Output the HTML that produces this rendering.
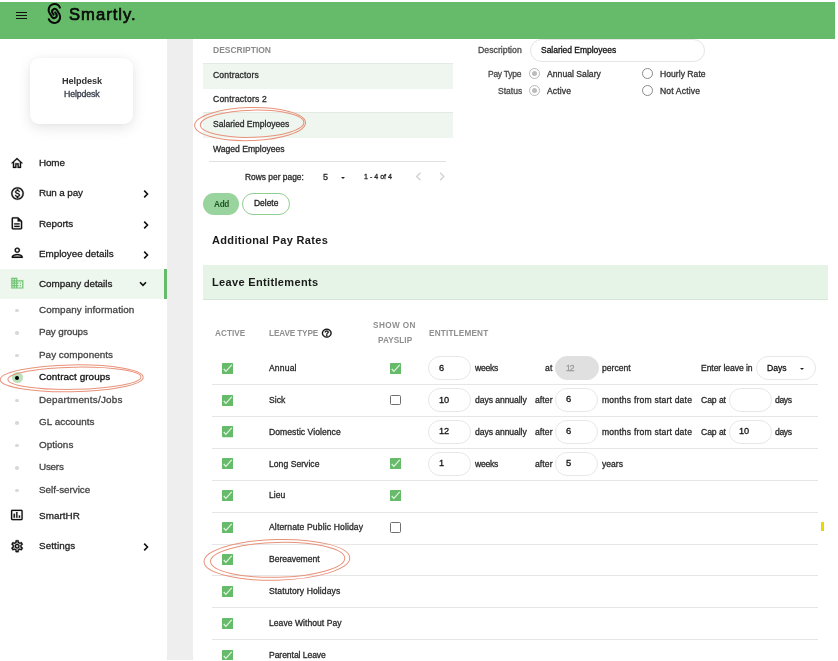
<!DOCTYPE html><html><head><meta charset="utf-8"><style>
html,body{margin:0;padding:0;background:#fff;width:838px;height:661px;overflow:hidden;position:relative}
.t{position:absolute;white-space:nowrap;will-change:transform;line-height:20px;font-family:"Liberation Sans",sans-serif;-webkit-text-stroke:0.3px currentColor;}
.b{font-weight:700;-webkit-text-stroke:0;}
</style></head><body>
<div style="position:absolute;left:0;top:2px;width:835px;height:36.6px;background:#66bb6a;"></div>
<div style="position:absolute;left:16px;top:11.6px;width:11px;height:1.3px;background:#111;"></div>
<div style="position:absolute;left:16px;top:14.6px;width:11px;height:1.3px;background:#111;"></div>
<div style="position:absolute;left:16px;top:17.6px;width:11px;height:1.3px;background:#111;"></div>
<svg style="position:absolute;left:44px;top:0px" width="22" height="28" viewBox="0 0 22 28" fill="none" stroke="#0a0a0a" stroke-width="2.05" stroke-linecap="round">
<path d="M15.98,7.64 A5.9,5.9 0 1 0 5.50,12.97 L7.94,16.87 A2.6,2.6 0 0 0 12.35,14.12 L11.18,12.25"/>
<path d="M4.82,19.26 A5.9,5.9 0 1 0 15.30,13.93 L12.86,10.03 A2.6,2.6 0 0 0 8.45,12.78 L9.62,14.65"/>
</svg>
<div class="t" style="left:68.80px;top:5.05px;font-size:16.6px;color:#0a0a0a;letter-spacing:1.003px;-webkit-text-stroke:0.65px #0a0a0a;">Smartly.</div>
<div style="position:absolute;left:167px;top:38.6px;width:26px;height:621px;background:#eeeeee;"></div>
<div style="position:absolute;left:29.5px;top:58.2px;width:103.4px;height:65.9px;border-radius:9px;background:#fff;box-shadow:0 4px 14px rgba(0,0,0,0.10),0 0 4px rgba(0,0,0,0.03);"></div>
<div class="t b" style="left:61.90px;top:70.81px;font-size:9.2px;color:#333;letter-spacing:-0.120px;">Helpdesk</div>
<div class="t" style="left:64.00px;top:83.95px;font-size:8.8px;color:#3d4250;letter-spacing:-0.134px;-webkit-text-stroke:0.35px #3d4250;">Helpdesk</div>
<div style="position:absolute;left:0;top:268.6px;width:167px;height:30.2px;background:#edf7ee;"></div>
<div style="position:absolute;left:164.3px;top:268.6px;width:3px;height:30.2px;background:#66bb6a;"></div>
<div class="t" style="left:39.20px;top:153.27px;font-size:9.9px;color:#1e1e1e;letter-spacing:-0.144px;">Home</div>
<div class="t" style="left:39.20px;top:182.87px;font-size:9.9px;color:#1e1e1e;letter-spacing:-0.130px;">Run a pay</div>
<div class="t" style="left:39.20px;top:213.77px;font-size:9.9px;color:#1e1e1e;letter-spacing:-0.058px;">Reports</div>
<div class="t" style="left:39.20px;top:243.57px;font-size:9.9px;color:#1e1e1e;letter-spacing:-0.033px;">Employee details</div>
<div class="t" style="left:39.20px;top:274.07px;font-size:9.9px;color:#1e1e1e;letter-spacing:-0.011px;">Company details</div>
<div class="t" style="left:39.20px;top:506.47px;font-size:9.9px;color:#1e1e1e;letter-spacing:0.052px;">SmartHR</div>
<div class="t" style="left:39.20px;top:536.27px;font-size:9.9px;color:#1e1e1e;letter-spacing:0.087px;">Settings</div>
<div class="t" style="left:39.00px;top:299.97px;font-size:9.9px;color:#444;letter-spacing:0.083px;">Company information</div>
<div style="position:absolute;left:15.3px;top:308.8px;width:3.6px;height:3.6px;border-radius:50%;background:#d8d8d8;"></div>
<div class="t" style="left:39.00px;top:322.37px;font-size:9.9px;color:#444;letter-spacing:-0.122px;">Pay groups</div>
<div style="position:absolute;left:15.3px;top:331.2px;width:3.6px;height:3.6px;border-radius:50%;background:#d8d8d8;"></div>
<div class="t" style="left:39.00px;top:345.07px;font-size:9.9px;color:#444;letter-spacing:0.027px;">Pay components</div>
<div style="position:absolute;left:15.3px;top:353.9px;width:3.6px;height:3.6px;border-radius:50%;background:#d8d8d8;"></div>
<div class="t" style="left:39.00px;top:367.47px;font-size:9.9px;color:#111;letter-spacing:0.069px;">Contract groups</div>
<div style="position:absolute;left:11.7px;top:372.2px;width:11px;height:11px;border-radius:50%;background:#b9dfbb;"></div>
<div style="position:absolute;left:15.2px;top:375.7px;width:4px;height:4px;border-radius:50%;background:#000;"></div>
<div class="t" style="left:39.00px;top:389.87px;font-size:9.9px;color:#444;letter-spacing:0.217px;">Departments/Jobs</div>
<div style="position:absolute;left:15.3px;top:398.7px;width:3.6px;height:3.6px;border-radius:50%;background:#d8d8d8;"></div>
<div class="t" style="left:39.00px;top:412.37px;font-size:9.9px;color:#444;letter-spacing:0.031px;">GL accounts</div>
<div style="position:absolute;left:15.3px;top:421.2px;width:3.6px;height:3.6px;border-radius:50%;background:#d8d8d8;"></div>
<div class="t" style="left:39.00px;top:434.77px;font-size:9.9px;color:#444;letter-spacing:0.049px;">Options</div>
<div style="position:absolute;left:15.3px;top:443.6px;width:3.6px;height:3.6px;border-radius:50%;background:#d8d8d8;"></div>
<div class="t" style="left:39.00px;top:457.47px;font-size:9.9px;color:#444;letter-spacing:-0.235px;">Users</div>
<div style="position:absolute;left:15.3px;top:466.3px;width:3.6px;height:3.6px;border-radius:50%;background:#d8d8d8;"></div>
<div class="t" style="left:39.00px;top:479.87px;font-size:9.9px;color:#444;letter-spacing:-0.030px;">Self-service</div>
<div style="position:absolute;left:15.3px;top:488.7px;width:3.6px;height:3.6px;border-radius:50%;background:#d8d8d8;"></div>
<svg style="position:absolute;left:141px;top:188.1px" width="10" height="12" viewBox="0 0 10 12"><path d="M3.2 2.6 L6.5 6 L3.2 9.4" fill="none" stroke="#111" stroke-width="1.6"/></svg>
<svg style="position:absolute;left:141px;top:218.6px" width="10" height="12" viewBox="0 0 10 12"><path d="M3.2 2.6 L6.5 6 L3.2 9.4" fill="none" stroke="#111" stroke-width="1.6"/></svg>
<svg style="position:absolute;left:141px;top:248.8px" width="10" height="12" viewBox="0 0 10 12"><path d="M3.2 2.6 L6.5 6 L3.2 9.4" fill="none" stroke="#111" stroke-width="1.6"/></svg>
<svg style="position:absolute;left:141px;top:541.0px" width="10" height="12" viewBox="0 0 10 12"><path d="M3.2 2.6 L6.5 6 L3.2 9.4" fill="none" stroke="#111" stroke-width="1.6"/></svg>
<svg style="position:absolute;left:137.2px;top:278.8px" width="12" height="10" viewBox="0 0 12 10"><path d="M3 3.2 L6 6.4 L9 3.2" fill="none" stroke="#111" stroke-width="1.6"/></svg>
<svg style="position:absolute;left:10.09px;top:155.95px" width="13.98" height="14.40" viewBox="0 0 24 24" preserveAspectRatio="none"><path d="M12 5.69l5 4.5V18h-2v-6H9v6H7v-7.81l5-4.5M12 3L2 12h3v8h6v-6h2v6h6v-8h3L12 3z" fill="#111" stroke="#111" stroke-width="0.45"/></svg>
<svg style="position:absolute;left:9.75px;top:185.75px" width="15.00" height="15.00" viewBox="0 0 24 24" preserveAspectRatio="none"><path d="M12 2C6.48 2 2 6.48 2 12s4.48 10 10 10 10-4.48 10-10S17.52 2 12 2zm0 18c-4.41 0-8-3.59-8-8s3.59-8 8-8 8 3.59 8 8-3.59 8-8 8zm.31-8.86c-1.770-.45-2.34-.94-2.34-1.67 0-.84.79-1.43 2.1-1.43 1.38 0 1.9.66 1.94 1.64h1.71c-.05-1.34-.87-2.57-2.49-2.970V5H10.9v1.69c-1.51.32-2.72 1.3-2.72 2.81 0 1.79 1.49 2.69 3.66 3.21 1.95.46 2.34 1.15 2.34 1.87 0 .53-.39 1.39-2.1 1.39-1.6 0-2.23-.72-2.32-1.64H8.04c.1 1.7 1.36 2.66 2.86 2.97V19h2.34v-1.67c1.52-.29 2.72-1.16 2.73-2.77-.01-2.2-1.9-2.96-3.66-3.42z" fill="#111" stroke="#111" stroke-width="0.5"/></svg>
<svg style="position:absolute;left:9.06px;top:215.88px" width="15.84" height="14.64" viewBox="0 0 24 24" preserveAspectRatio="none"><path d="M8 16h8v2H8zm0-4h8v2H8zm6-10H6c-1.1 0-2 .9-2 2v16c0 1.1.89 2 1.99 2H18c1.1 0 2-.9 2-2V8l-6-6zm4 18H6V4h7v5h5v11z" fill="#111" stroke="#111" stroke-width="0.3"/></svg>
<svg style="position:absolute;left:8.65px;top:245.32px" width="16.50" height="15.48" viewBox="0 0 24 24" preserveAspectRatio="none"><path d="M12 6c1.1 0 2 .9 2 2s-.9 2-2 2-2-.9-2-2 .9-2 2-2m0 10c2.7 0 5.8 1.29 6 2H6c.23-.72 3.31-2 6-2m0-12C9.79 4 8 5.79 8 8s1.79 4 4 4 4-1.79 4-4-1.79-4-4-4zm0 10c-2.67 0-8 1.34-8 4v2h16v-2c0-2.66-5.33-4-8-4z" fill="#111" stroke="#111" stroke-width="0.25"/></svg>
<svg style="position:absolute;left:9.58px;top:276.10px" width="14.64" height="14.40" viewBox="0 0 24 24" preserveAspectRatio="none"><path d="M12 7V3H2v18h20V7H12zM6 19H4v-2h2v2zm0-4H4v-2h2v2zm0-4H4V9h2v2zm0-4H4V5h2v2zm4 12H8v-2h2v2zm0-4H8v-2h2v2zm0-4H8V9h2v2zm0-4H8V5h2v2zm10 12h-8v-2h2v-2h-2v-2h2v-2h-2V9h8v10zm-2-8h-2v2h2v-2zm0 4h-2v2h2v-2z" fill="#74c477" stroke="#74c477" stroke-width="0.1"/></svg>
<svg style="position:absolute;left:9.29px;top:508.47px" width="15.67" height="13.87" viewBox="0 0 24 24" preserveAspectRatio="none"><path d="M9 17H7v-7h2v7zm4 0h-2V7h2v10zm4 0h-2v-4h2v4zm2 2H5V5h14v14zm0-16H5c-1.1 0-2 .9-2 2v14c0 1.1.9 2 2 2h14c1.1 0 2-.9 2-2V5c0-1.1-.9-2-2-2z" fill="#111" stroke="#111" stroke-width="0.3"/></svg>
<svg style="position:absolute;left:9.88px;top:538.70px" width="14.28" height="14.40" viewBox="0 0 24 24" preserveAspectRatio="none"><path d="M19.43 12.98c.04-.32.07-.64.07-.98 0-.34-.03-.66-.07-.98l2.11-1.65c.19-.15.24-.42.12-.64l-2-3.46c-.09-.16-.26-.25-.44-.25-.06 0-.12.01-.17.03l-2.49 1c-.52-.4-1.08-.73-1.69-.98l-.38-2.65C14.46 2.18 14.25 2 14 2h-4c-.25 0-.46.18-.49.42l-.38 2.65c-.61.25-1.170.59-1.69.98l-2.49-1c-.06-.02-.12-.03-.18-.03-.17 0-.34.09-.43.25l-2 3.46c-.13.22-.07.49.12.64l2.11 1.65c-.04.32-.07.65-.07.98 0 .33.03.66.07.98l-2.11 1.65c-.19.15-.24.42-.12.64l2 3.46c.09.16.26.25.44.25.06 0 .12-.01.17-.03l2.49-1c.52.4 1.08.73 1.69.98l.38 2.65c.03.24.24.42.49.42h4c.25 0 .46-.18.49-.42l.38-2.65c.61-.25 1.17-.59 1.69-.98l2.49 1c.06.02.12.03.18.03.17 0 .34-.09.43-.25l2-3.46c.12-.22.07-.49-.12-.64l-2.11-1.65zm-1.98-1.71c.04.31.05.52.05.73 0 .21-.02.43-.05.73l-.14 1.13.89.7 1.08.84-.7 1.21-1.27-.51-1.04-.42-.9.68c-.43.32-.84.56-1.25.73l-1.06.43-.16 1.13-.2 1.35h-1.4l-.19-1.35-.16-1.13-1.06-.43c-.43-.18-.83-.41-1.23-.71l-.91-.7-1.06.43-1.27.51-.7-1.21 1.08-.84.89-.7-.14-1.13c-.03-.31-.05-.54-.05-.74s.02-.43.05-.73l.14-1.13-.89-.7-1.08-.84.7-1.21 1.27.51 1.04.42.9-.68c.43-.32.84-.56 1.25-.73l1.06-.43.16-1.13.2-1.35h1.39l.19 1.35.16 1.13 1.06.43c.43.18.83.41 1.23.71l.91.7 1.06-.43 1.27-.51.7 1.21-1.07.85-.89.7.14 1.130zM12 8c-2.21 0-4 1.79-4 4s1.79 4 4 4 4-1.79 4-4-1.79-4-4-4zm0 6c-1.1 0-2-.9-2-2s.9-2 2-2 2 .9 2 2-.9 2-2 2z" fill="#111" stroke="#111" stroke-width="0.6"/></svg>
<div style="position:absolute;left:202.5px;top:62.7px;width:250px;height:25.9px;background:#eef6ef;border-top:1px solid #e3eae3;box-sizing:border-box;"></div>
<div style="position:absolute;left:202.5px;top:112px;width:250px;height:26px;background:#eef6ef;border-top:1px solid #e3eae3;box-sizing:border-box;"></div>
<div style="position:absolute;left:209px;top:161px;width:237px;height:1px;background:#e0e0e0;"></div>
<div class="t b" style="left:213.00px;top:39.75px;font-size:8.5px;color:#8a8a8a;letter-spacing:-0.010px;">DESCRIPTION</div>
<div class="t" style="left:213.00px;top:64.82px;font-size:8.6px;color:#2a2a2a;letter-spacing:0.134px;">Contractors</div>
<div class="t" style="left:213.00px;top:89.02px;font-size:8.6px;color:#2a2a2a;letter-spacing:0.180px;">Contractors 2</div>
<div class="t" style="left:213.00px;top:114.02px;font-size:8.6px;color:#2a2a2a;letter-spacing:-0.006px;">Salaried Employees</div>
<div class="t" style="left:213.30px;top:138.72px;font-size:8.6px;color:#2a2a2a;letter-spacing:-0.011px;">Waged Employees</div>
<div class="t" style="left:245.40px;top:167.09px;font-size:8.4px;color:#2a2a2a;letter-spacing:0.012px;">Rows per page:</div>
<div class="t" style="left:322.90px;top:166.88px;font-size:9px;color:#2a2a2a;letter-spacing:0.000px;">5</div>
<div style="position:absolute;left:340.5px;top:176.8px;width:0;height:0;border-left:2.2px solid transparent;border-right:2.2px solid transparent;border-top:2.6px solid #222;"></div>
<div class="t" style="left:363.60px;top:167.04px;font-size:7.1px;color:#2a2a2a;letter-spacing:-0.001px;">1 - 4 of 4</div>
<svg style="position:absolute;left:413px;top:171px" width="10" height="11" viewBox="0 0 10 11"><path d="M7.5 1.8 L3.6 5.5 L7.5 9.2" fill="none" stroke="#cfcfcf" stroke-width="1.2"/></svg>
<svg style="position:absolute;left:436.5px;top:171px" width="10" height="11" viewBox="0 0 10 11"><path d="M3 1.8 L6.9 5.5 L3 9.2" fill="none" stroke="#cfcfcf" stroke-width="1.2"/></svg>
<div style="position:absolute;left:203px;top:193.2px;width:35.5px;height:21.7px;border-radius:11px;background:#99d39d;"></div>
<div class="t b" style="left:214.00px;top:194.56px;font-size:8.2px;color:#1d5422;letter-spacing:-0.274px;">Add</div>
<div style="position:absolute;left:242.3px;top:193.2px;width:47.7px;height:21.7px;border-radius:11px;background:#fff;border:1px solid #8fcf92;box-sizing:border-box;"></div>
<div class="t" style="left:254.40px;top:193.35px;font-size:8.5px;color:#222;letter-spacing:-0.033px;">Delete</div>
<div class="t" style="left:478.00px;top:40.49px;font-size:8.7px;color:#4a4a4a;letter-spacing:0.030px;">Description</div>
<div style="position:absolute;left:529.5px;top:38.8px;width:175px;height:23.5px;border-radius:12px;border:1px solid #e4e4e4;box-sizing:border-box;background:#fff;"></div>
<div class="t" style="left:541.00px;top:40.05px;font-size:8.5px;color:#111;letter-spacing:-0.024px;">Salaried Employees</div>
<div class="t" style="left:488.40px;top:63.95px;font-size:8.5px;color:#4a4a4a;letter-spacing:-0.268px;">Pay Type</div>
<div class="t" style="left:497.60px;top:81.05px;font-size:8.5px;color:#4a4a4a;letter-spacing:0.020px;">Status</div>
<div style="position:absolute;left:529.2px;top:67.8px;width:11px;height:11px;border-radius:50%;border:1.5px solid #b8b8b8;box-sizing:border-box;"></div>
<div style="position:absolute;left:532px;top:70.6px;width:5.4px;height:5.4px;border-radius:50%;background:#bcbcbc;"></div>
<div style="position:absolute;left:642px;top:67.8px;width:11px;height:11px;border-radius:50%;border:1.2px solid #8a8a8a;box-sizing:border-box;"></div>
<div style="position:absolute;left:529.2px;top:84.9px;width:11px;height:11px;border-radius:50%;border:1.5px solid #b8b8b8;box-sizing:border-box;"></div>
<div style="position:absolute;left:532px;top:87.7px;width:5.4px;height:5.4px;border-radius:50%;background:#bcbcbc;"></div>
<div style="position:absolute;left:642px;top:84.9px;width:11px;height:11px;border-radius:50%;border:1.2px solid #8a8a8a;box-sizing:border-box;"></div>
<div class="t" style="left:547.20px;top:63.92px;font-size:8.6px;color:#333;letter-spacing:0.030px;">Annual Salary</div>
<div class="t" style="left:660.10px;top:63.92px;font-size:8.6px;color:#333;letter-spacing:0.019px;">Hourly Rate</div>
<div class="t" style="left:547.00px;top:81.02px;font-size:8.6px;color:#333;letter-spacing:0.113px;">Active</div>
<div class="t" style="left:660.00px;top:81.02px;font-size:8.6px;color:#333;letter-spacing:0.144px;">Not Active</div>
<div class="t b" style="left:212.40px;top:229.99px;font-size:11px;color:#1a1a1a;letter-spacing:0.342px;">Additional Pay Rates</div>
<div style="position:absolute;left:202.5px;top:265px;width:625.5px;height:35px;background:#e5f4e6;border-bottom:1px solid #d5e6d6;box-sizing:border-box;"></div>
<div class="t b" style="left:212.40px;top:271.69px;font-size:11px;color:#1a1a1a;letter-spacing:0.343px;">Leave Entitlements</div>
<div class="t b" style="left:215.40px;top:323.56px;font-size:8.2px;color:#8f8f8f;letter-spacing:0.029px;">ACTIVE</div>
<div class="t b" style="left:268.50px;top:323.56px;font-size:8.2px;color:#8f8f8f;letter-spacing:-0.126px;">LEAVE TYPE</div>
<div class="t b" style="left:373.40px;top:315.86px;font-size:8.2px;color:#8f8f8f;letter-spacing:0.417px;">SHOW ON</div>
<div class="t b" style="left:377.90px;top:331.06px;font-size:8.2px;color:#8f8f8f;letter-spacing:0.076px;">PAYSLIP</div>
<div class="t b" style="left:428.50px;top:323.56px;font-size:8.2px;color:#8f8f8f;letter-spacing:0.190px;">ENTITLEMENT</div>
<svg style="position:absolute;left:321.04px;top:327.74px" width="11.52" height="10.32" viewBox="0 0 24 24" preserveAspectRatio="none"><path d="M11 18h2v-2h-2v2zm1-16C6.48 2 2 6.48 2 12s4.48 10 10 10 10-4.48 10-10S17.52 2 12 2zm0 18c-4.41 0-8-3.59-8-8s3.59-8 8-8 8 3.59 8 8-3.59 8-8 8zm0-14c-2.21 0-4 1.79-4 4h2c0-1.1.9-2 2-2s2 .9 2 2c0 2-3 1.75-3 5h2c0-2.25 3-2.5 3-5 0-2.21-1.79-4-4-4z" fill="#111" stroke="#111" stroke-width="0.9"/></svg>
<div style="position:absolute;left:211.7px;top:384.00px;width:606.5px;height:1px;background:#e6e6e6;"></div>
<div style="position:absolute;left:222px;top:362.60px;width:11.2px;height:11.2px;"><svg width="11.2" height="11.2" viewBox="0 0 12 12" style="position:absolute;left:0;top:0"><rect width="12" height="12" rx="1" fill="#66bb6a"/><path d="M1.9 6.4 L4.2 8.9 L10.4 2.1" fill="none" stroke="#e3f5e3" stroke-width="1.3"/></svg></div>
<div class="t" style="left:268.50px;top:357.82px;font-size:8.6px;color:#2a2a2a;letter-spacing:0.142px;">Annual</div>
<div style="position:absolute;left:389.7px;top:362.60px;width:11.2px;height:11.2px;"><svg width="11.2" height="11.2" viewBox="0 0 12 12" style="position:absolute;left:0;top:0"><rect width="12" height="12" rx="1" fill="#66bb6a"/><path d="M1.9 6.4 L4.2 8.9 L10.4 2.1" fill="none" stroke="#e3f5e3" stroke-width="1.3"/></svg></div>
<div style="position:absolute;left:428.2px;top:356.4px;width:43px;height:23.5px;border-radius:12px;background:#fff;border:1px solid #e8e8e8;box-sizing:border-box;"></div>
<div class="t" style="left:439.30px;top:357.61px;font-size:9.2px;color:#111;letter-spacing:0.000px;">6</div>
<div class="t" style="left:474.64px;top:357.82px;font-size:8.6px;color:#2a2a2a;letter-spacing:-0.256px;">weeks</div>
<div class="t" style="left:544.80px;top:357.82px;font-size:8.6px;color:#2a2a2a;letter-spacing:0.119px;">at</div>
<div style="position:absolute;left:555.1px;top:356.4px;width:43.5px;height:23.5px;border-radius:12px;background:#e0e0e0;border:1px solid #e0e0e0;box-sizing:border-box;"></div>
<div class="t" style="left:565.70px;top:357.82px;font-size:8.6px;color:#9a9a9a;letter-spacing:-0.946px;">12</div>
<div class="t" style="left:601.60px;top:357.82px;font-size:8.6px;color:#2a2a2a;letter-spacing:0.003px;">percent</div>
<div class="t" style="left:700.70px;top:357.82px;font-size:8.6px;color:#2a2a2a;letter-spacing:-0.076px;">Enter leave in</div>
<div style="position:absolute;left:756.2px;top:356.2px;width:59.5px;height:24.3px;border-radius:12px;background:#fff;border:1px solid #e8e8e8;box-sizing:border-box;"></div>
<div class="t" style="left:766.90px;top:357.82px;font-size:8.6px;color:#111;letter-spacing:0.000px;">Days</div>
<div style="position:absolute;left:799.6px;top:367.50px;width:0;height:0;border-left:2.5px solid transparent;border-right:2.5px solid transparent;border-top:2.9px solid #222;"></div>
<div style="position:absolute;left:211.7px;top:415.90px;width:606.5px;height:1px;background:#e6e6e6;"></div>
<div style="position:absolute;left:222px;top:394.50px;width:11.2px;height:11.2px;"><svg width="11.2" height="11.2" viewBox="0 0 12 12" style="position:absolute;left:0;top:0"><rect width="12" height="12" rx="1" fill="#66bb6a"/><path d="M1.9 6.4 L4.2 8.9 L10.4 2.1" fill="none" stroke="#e3f5e3" stroke-width="1.3"/></svg></div>
<div class="t" style="left:268.50px;top:389.72px;font-size:8.6px;color:#2a2a2a;letter-spacing:0.000px;">Sick</div>
<div style="position:absolute;left:390.0px;top:394.80px;width:10.6px;height:10.6px;border:1.1px solid #6f6f6f;border-radius:1.5px;box-sizing:border-box;"></div>
<div style="position:absolute;left:428.2px;top:388.29999999999995px;width:43px;height:23.5px;border-radius:12px;background:#fff;border:1px solid #e8e8e8;box-sizing:border-box;"></div>
<div class="t" style="left:439.30px;top:389.51px;font-size:9.2px;color:#111;letter-spacing:0.000px;">10</div>
<div class="t" style="left:474.60px;top:389.72px;font-size:8.6px;color:#2a2a2a;letter-spacing:-0.066px;">days annually</div>
<div class="t" style="left:535.00px;top:389.72px;font-size:8.6px;color:#2a2a2a;letter-spacing:0.075px;">after</div>
<div style="position:absolute;left:555.3px;top:388.29999999999995px;width:42.8px;height:23.5px;border-radius:12px;background:#fff;border:1px solid #e8e8e8;box-sizing:border-box;"></div>
<div class="t" style="left:566.00px;top:389.44px;font-size:9.4px;color:#111;letter-spacing:0.000px;">6</div>
<div class="t" style="left:602.00px;top:389.72px;font-size:8.6px;color:#2a2a2a;letter-spacing:0.188px;">months from start date</div>
<div class="t" style="left:700.70px;top:389.72px;font-size:8.6px;color:#2a2a2a;letter-spacing:-0.065px;">Cap at</div>
<div style="position:absolute;left:729px;top:388.29999999999995px;width:43.4px;height:23.5px;border-radius:12px;background:#fff;border:1px solid #e8e8e8;box-sizing:border-box;"></div>
<div class="t" style="left:775.10px;top:389.72px;font-size:8.6px;color:#2a2a2a;letter-spacing:-0.349px;">days</div>
<div style="position:absolute;left:211.7px;top:447.80px;width:606.5px;height:1px;background:#e6e6e6;"></div>
<div style="position:absolute;left:222px;top:426.40px;width:11.2px;height:11.2px;"><svg width="11.2" height="11.2" viewBox="0 0 12 12" style="position:absolute;left:0;top:0"><rect width="12" height="12" rx="1" fill="#66bb6a"/><path d="M1.9 6.4 L4.2 8.9 L10.4 2.1" fill="none" stroke="#e3f5e3" stroke-width="1.3"/></svg></div>
<div class="t" style="left:268.50px;top:421.62px;font-size:8.6px;color:#2a2a2a;letter-spacing:0.045px;">Domestic Violence</div>
<div style="position:absolute;left:428.2px;top:420.2px;width:43px;height:23.5px;border-radius:12px;background:#fff;border:1px solid #e8e8e8;box-sizing:border-box;"></div>
<div class="t" style="left:439.30px;top:421.41px;font-size:9.2px;color:#111;letter-spacing:0.000px;">12</div>
<div class="t" style="left:474.60px;top:421.62px;font-size:8.6px;color:#2a2a2a;letter-spacing:-0.066px;">days annually</div>
<div class="t" style="left:535.00px;top:421.62px;font-size:8.6px;color:#2a2a2a;letter-spacing:0.075px;">after</div>
<div style="position:absolute;left:555.3px;top:420.2px;width:42.8px;height:23.5px;border-radius:12px;background:#fff;border:1px solid #e8e8e8;box-sizing:border-box;"></div>
<div class="t" style="left:566.00px;top:421.34px;font-size:9.4px;color:#111;letter-spacing:0.000px;">6</div>
<div class="t" style="left:602.00px;top:421.62px;font-size:8.6px;color:#2a2a2a;letter-spacing:0.188px;">months from start date</div>
<div class="t" style="left:700.70px;top:421.62px;font-size:8.6px;color:#2a2a2a;letter-spacing:-0.065px;">Cap at</div>
<div style="position:absolute;left:729px;top:420.2px;width:43.4px;height:23.5px;border-radius:12px;background:#fff;border:1px solid #e8e8e8;box-sizing:border-box;"></div>
<div class="t" style="left:739.40px;top:421.41px;font-size:9.2px;color:#111;letter-spacing:0.000px;">10</div>
<div class="t" style="left:775.10px;top:421.62px;font-size:8.6px;color:#2a2a2a;letter-spacing:-0.349px;">days</div>
<div style="position:absolute;left:211.7px;top:479.70px;width:606.5px;height:1px;background:#e6e6e6;"></div>
<div style="position:absolute;left:222px;top:458.30px;width:11.2px;height:11.2px;"><svg width="11.2" height="11.2" viewBox="0 0 12 12" style="position:absolute;left:0;top:0"><rect width="12" height="12" rx="1" fill="#66bb6a"/><path d="M1.9 6.4 L4.2 8.9 L10.4 2.1" fill="none" stroke="#e3f5e3" stroke-width="1.3"/></svg></div>
<div class="t" style="left:268.50px;top:453.52px;font-size:8.6px;color:#2a2a2a;letter-spacing:0.029px;">Long Service</div>
<div style="position:absolute;left:389.7px;top:458.30px;width:11.2px;height:11.2px;"><svg width="11.2" height="11.2" viewBox="0 0 12 12" style="position:absolute;left:0;top:0"><rect width="12" height="12" rx="1" fill="#66bb6a"/><path d="M1.9 6.4 L4.2 8.9 L10.4 2.1" fill="none" stroke="#e3f5e3" stroke-width="1.3"/></svg></div>
<div style="position:absolute;left:428.2px;top:452.09999999999997px;width:43px;height:23.5px;border-radius:12px;background:#fff;border:1px solid #e8e8e8;box-sizing:border-box;"></div>
<div class="t" style="left:439.30px;top:453.31px;font-size:9.2px;color:#111;letter-spacing:0.000px;">1</div>
<div class="t" style="left:474.64px;top:453.52px;font-size:8.6px;color:#2a2a2a;letter-spacing:-0.256px;">weeks</div>
<div class="t" style="left:535.00px;top:453.52px;font-size:8.6px;color:#2a2a2a;letter-spacing:0.075px;">after</div>
<div style="position:absolute;left:555.3px;top:452.09999999999997px;width:42.8px;height:23.5px;border-radius:12px;background:#fff;border:1px solid #e8e8e8;box-sizing:border-box;"></div>
<div class="t" style="left:566.00px;top:453.24px;font-size:9.4px;color:#111;letter-spacing:0.000px;">5</div>
<div class="t" style="left:601.90px;top:453.52px;font-size:8.6px;color:#2a2a2a;letter-spacing:0.000px;">years</div>
<div style="position:absolute;left:211.7px;top:511.60px;width:606.5px;height:1px;background:#e6e6e6;"></div>
<div style="position:absolute;left:222px;top:490.20px;width:11.2px;height:11.2px;"><svg width="11.2" height="11.2" viewBox="0 0 12 12" style="position:absolute;left:0;top:0"><rect width="12" height="12" rx="1" fill="#66bb6a"/><path d="M1.9 6.4 L4.2 8.9 L10.4 2.1" fill="none" stroke="#e3f5e3" stroke-width="1.3"/></svg></div>
<div class="t" style="left:268.50px;top:485.42px;font-size:8.6px;color:#2a2a2a;letter-spacing:-0.018px;">Lieu</div>
<div style="position:absolute;left:389.7px;top:490.20px;width:11.2px;height:11.2px;"><svg width="11.2" height="11.2" viewBox="0 0 12 12" style="position:absolute;left:0;top:0"><rect width="12" height="12" rx="1" fill="#66bb6a"/><path d="M1.9 6.4 L4.2 8.9 L10.4 2.1" fill="none" stroke="#e3f5e3" stroke-width="1.3"/></svg></div>
<div style="position:absolute;left:211.7px;top:543.50px;width:606.5px;height:1px;background:#e6e6e6;"></div>
<div style="position:absolute;left:222px;top:522.10px;width:11.2px;height:11.2px;"><svg width="11.2" height="11.2" viewBox="0 0 12 12" style="position:absolute;left:0;top:0"><rect width="12" height="12" rx="1" fill="#66bb6a"/><path d="M1.9 6.4 L4.2 8.9 L10.4 2.1" fill="none" stroke="#e3f5e3" stroke-width="1.3"/></svg></div>
<div class="t" style="left:268.50px;top:517.32px;font-size:8.6px;color:#2a2a2a;letter-spacing:0.122px;">Alternate Public Holiday</div>
<div style="position:absolute;left:390.0px;top:522.40px;width:10.6px;height:10.6px;border:1.1px solid #6f6f6f;border-radius:1.5px;box-sizing:border-box;"></div>
<div style="position:absolute;left:211.7px;top:575.40px;width:606.5px;height:1px;background:#e6e6e6;"></div>
<div style="position:absolute;left:222px;top:554.00px;width:11.2px;height:11.2px;"><svg width="11.2" height="11.2" viewBox="0 0 12 12" style="position:absolute;left:0;top:0"><rect width="12" height="12" rx="1" fill="#66bb6a"/><path d="M1.9 6.4 L4.2 8.9 L10.4 2.1" fill="none" stroke="#e3f5e3" stroke-width="1.3"/></svg></div>
<div class="t" style="left:268.50px;top:549.22px;font-size:8.6px;color:#2a2a2a;letter-spacing:-0.057px;">Bereavement</div>
<div style="position:absolute;left:211.7px;top:607.30px;width:606.5px;height:1px;background:#e6e6e6;"></div>
<div style="position:absolute;left:222px;top:585.90px;width:11.2px;height:11.2px;"><svg width="11.2" height="11.2" viewBox="0 0 12 12" style="position:absolute;left:0;top:0"><rect width="12" height="12" rx="1" fill="#66bb6a"/><path d="M1.9 6.4 L4.2 8.9 L10.4 2.1" fill="none" stroke="#e3f5e3" stroke-width="1.3"/></svg></div>
<div class="t" style="left:268.50px;top:581.12px;font-size:8.6px;color:#2a2a2a;letter-spacing:0.089px;">Statutory Holidays</div>
<div style="position:absolute;left:211.7px;top:639.20px;width:606.5px;height:1px;background:#e6e6e6;"></div>
<div style="position:absolute;left:222px;top:617.80px;width:11.2px;height:11.2px;"><svg width="11.2" height="11.2" viewBox="0 0 12 12" style="position:absolute;left:0;top:0"><rect width="12" height="12" rx="1" fill="#66bb6a"/><path d="M1.9 6.4 L4.2 8.9 L10.4 2.1" fill="none" stroke="#e3f5e3" stroke-width="1.3"/></svg></div>
<div class="t" style="left:268.50px;top:613.02px;font-size:8.6px;color:#2a2a2a;letter-spacing:0.025px;">Leave Without Pay</div>
<div style="position:absolute;left:222px;top:649.70px;width:11.2px;height:11.2px;"><svg width="11.2" height="11.2" viewBox="0 0 12 12" style="position:absolute;left:0;top:0"><rect width="12" height="12" rx="1" fill="#66bb6a"/><path d="M1.9 6.4 L4.2 8.9 L10.4 2.1" fill="none" stroke="#e3f5e3" stroke-width="1.3"/></svg></div>
<div class="t" style="left:268.50px;top:644.92px;font-size:8.6px;color:#2a2a2a;letter-spacing:-0.072px;">Parental Leave</div>
<div style="position:absolute;left:821px;top:522.2px;width:3.3px;height:8.7px;background:#e6d800;"></div>
<div style="position:absolute;left:0;top:659.6px;width:838px;height:2px;background:#fff;"></div>
<div style="position:absolute;left:835px;top:0;width:3px;height:661px;background:#fff;"></div>
<svg style="position:absolute;left:0;top:0" width="838" height="661" viewBox="0 0 838 661"><g fill="none" stroke="#e8927a" stroke-width="1.0" transform="rotate(-1.5 250.1 124.1)"><path d="M305.60,124.10 C305.60,114.99 280.75,107.60 250.10,107.60 C219.45,107.60 194.60,114.99 194.60,124.10 C194.60,133.21 219.45,140.60 250.10,140.60 C280.75,140.60 305.60,133.21 305.60,124.10"/><path d="M304.00,123.80 C304.00,116.29 280.79,110.20 252.15,110.20 C223.51,110.20 200.30,116.29 200.30,123.80 C200.30,131.31 223.51,137.40 252.15,137.40 C280.79,137.40 304.00,131.31 304.00,123.80"/></g></svg>
<svg style="position:absolute;left:0;top:0" width="838" height="661" viewBox="0 0 838 661"><g fill="none" stroke="#e8927a" stroke-width="1.0" transform="rotate(-1 71.7 378.4)"><path d="M143.20,378.35 C143.20,370.92 111.19,364.90 71.70,364.90 C32.21,364.90 0.20,370.92 0.20,378.35 C0.20,385.78 32.21,391.80 71.70,391.80 C111.19,391.80 143.20,385.78 143.20,378.35"/><path d="M141.00,378.30 C141.00,372.17 111.21,367.20 74.45,367.20 C37.69,367.20 7.90,372.17 7.90,378.30 C7.90,384.43 37.69,389.40 74.45,389.40 C111.21,389.40 141.00,384.43 141.00,378.30"/></g></svg>
<svg style="position:absolute;left:0;top:0" width="838" height="661" viewBox="0 0 838 661"><g fill="none" stroke="#e8927a" stroke-width="1.0" transform="rotate(-1.5 276.9 559.9)"><path d="M349.80,559.85 C349.80,548.61 317.16,539.50 276.90,539.50 C236.64,539.50 204.00,548.61 204.00,559.85 C204.00,571.09 236.64,580.20 276.90,580.20 C317.16,580.20 349.80,571.09 349.80,559.85"/><path d="M344.80,559.85 C344.80,550.21 314.74,542.40 277.65,542.40 C240.56,542.40 210.50,550.21 210.50,559.85 C210.50,569.49 240.56,577.30 277.65,577.30 C314.74,577.30 344.80,569.49 344.80,559.85"/></g></svg>
</body></html>
